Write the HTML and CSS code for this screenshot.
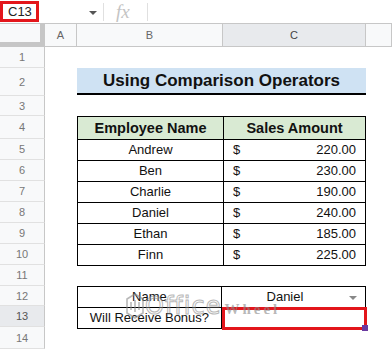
FILE: index.html
```html
<!DOCTYPE html>
<html lang="en">
<head>
  <meta charset="UTF-8">
  <meta name="viewport" content="width=device-width, initial-scale=1.0">
  <title>Using Comparison Operators</title>
  <link rel="stylesheet" href="styles.css">
</head>
<body>
  <div class="page">
    <div class="toolbar">
      <div class="namebox">C13</div>
      <div class="namebox-drop"><span class="caret"></span></div>
      <div class="sep"></div>
      <div class="fx">fx</div>
      <div class="sep"></div>
    </div>

    <div class="sheet">
      <!-- column headers -->
      <div class="corner"></div>
      <div class="colhead">A</div>
      <div class="colhead">B</div>
      <div class="colhead active">C</div>
      <div class="colhead"></div>

      <!-- row headers -->
      <div class="rowhead r1">1</div>
      <div class="rowhead r2">2</div>
      <div class="rowhead r3">3</div>
      <div class="rowhead r4">4</div>
      <div class="rowhead r5">5</div>
      <div class="rowhead r6">6</div>
      <div class="rowhead r7">7</div>
      <div class="rowhead r8">8</div>
      <div class="rowhead r9">9</div>
      <div class="rowhead r10">10</div>
      <div class="rowhead r11">11</div>
      <div class="rowhead r12">12</div>
      <div class="rowhead r13 active">13</div>
      <div class="rowhead r14">14</div>

      <div class="title">Using Comparison Operators</div>

      <table class="data">
        <tr class="head-row">
          <th>Employee Name</th>
          <th>Sales Amount</th>
        </tr>
        <tr><td class="name">Andrew</td><td class="amount"><span class="cur">$</span>220.00</td></tr>
        <tr><td class="name">Ben</td><td class="amount"><span class="cur">$</span>230.00</td></tr>
        <tr><td class="name">Charlie</td><td class="amount"><span class="cur">$</span>190.00</td></tr>
        <tr><td class="name">Daniel</td><td class="amount"><span class="cur">$</span>240.00</td></tr>
        <tr><td class="name">Ethan</td><td class="amount"><span class="cur">$</span>185.00</td></tr>
        <tr><td class="name">Finn</td><td class="amount"><span class="cur">$</span>225.00</td></tr>
      </table>

      <table class="data lookup">
        <tr class="row12">
          <td class="name">Name</td>
          <td class="name pick">Daniel<span class="pick-arrow"></span></td>
        </tr>
        <tr class="row13">
          <td class="name">Will Receive Bonus?</td>
          <td></td>
        </tr>
      </table>

      <div class="selection"><span class="handle"></span></div>
    </div>

    <!-- site watermark laid over the sheet -->
    <div class="watermark">
      <svg width="18" height="26" viewBox="0 0 18 26">
        <path d="M9 1 L17 6 L17 20 L9 25 L1 20 L1 6 Z" fill="none" stroke="#8a8a8a" stroke-width="1.6"/>
        <path d="M5 9 L5 17 M9 7 L9 19 M13 9 L13 17" stroke="#8a8a8a" stroke-width="1.6"/>
      </svg>
      <span class="wm-office">Office</span><span class="wm-wheel">Wheel</span>
    </div>
  </div>
</body>
</html>
```

FILE: styles.css
```css
* {
  box-sizing: border-box;
}
body {
  margin: 0;
  background: #fff;
  font-family: "Liberation Sans", Arial, sans-serif;
}
.page {
  position: relative;
  width: 392px;
  height: 352px;
  overflow: hidden;
}

/* formula bar */
.toolbar {
  display: flex;
  align-items: center;
  height: 24px;
  border-bottom: 1px solid #c7c7c7;
}
.namebox {
  width: 39px;
  height: 21px;
  border: 3px solid #e3161b;
  padding-left: 5px;
  font-size: 13px;
  line-height: 15px;
  color: #222;
}
.namebox-drop {
  width: 64px;
  display: flex;
  justify-content: flex-end;
  padding-right: 6px;
}
.caret {
  width: 0;
  height: 0;
  border-left: 4px solid transparent;
  border-right: 4px solid transparent;
  border-top: 4px solid #555;
  margin-top: 2px;
}
.sep {
  width: 1px;
  height: 18px;
  background: #e0e0e0;
}
.fx {
  width: 43px;
  padding-left: 12px;
  font-family: "Liberation Serif", serif;
  font-style: italic;
  font-size: 19px;
  color: #c4c4c4;
  line-height: 20px;
}

/* grid */
.sheet {
  display: grid;
  grid-template-columns: 45px 32px 146px 143px 1fr;
  grid-template-rows: 23px 21px 28px 20px 23px 21px 21px 21px 21px 21px 21px 21px 20px 21px 22px;
}
.corner {
  background: #f8f9fa;
  border-right: 5px solid #c6c6c6;
  border-bottom: 5px solid #c6c6c6;
}
.colhead {
  background: #f8f9fa;
  border-right: 1px solid #c7c7c7;
  border-bottom: 1px solid #c7c7c7;
  font-size: 11px;
  color: #666;
  text-align: center;
  line-height: 22px;
}
.colhead.active {
  background: #e8eaed;
  color: #444;
}
.rowhead {
  grid-column: 1;
  background: #f8f9fa;
  border-right: 1px solid #c7c7c7;
  border-bottom: 1px solid #e1e1e1;
  font-size: 11px;
  color: #777;
  display: flex;
  align-items: center;
  justify-content: center;
}
.rowhead.active {
  background: #e8eaed;
  color: #555;
}

.title {
  grid-row: 3;
  grid-column: 3 / 5;
  height: 27px;
  background: #cfe2f3;
  border-bottom: 2px solid #000;
  font-weight: bold;
  font-size: 17px;
  line-height: 25px;
  text-align: center;
  color: #111;
}

.data {
  grid-row: 5 / 12;
  grid-column: 3 / 5;
  align-self: start;
  border-collapse: collapse;
  width: 100%;
  font-size: 13px;
  color: #111;
}
.data td, .data th {
  border: 1px solid #000;
  padding: 0 9px;
  height: 21px;
  line-height: 18px;
}
.data th {
  background: #d9ead3;
  font-size: 14.5px;
  height: 23px;
}
.data td.name {
  text-align: center;
  width: 146px;
}
.data td.amount {
  text-align: right;
}
.cur {
  float: left;
}

.lookup {
  grid-row: 13 / 15;
}
.lookup .pick {
  position: relative;
  padding-right: 26px;
}
.pick-arrow {
  position: absolute;
  right: 8px;
  top: 9px;
  width: 0;
  height: 0;
  border-left: 4px solid transparent;
  border-right: 4px solid transparent;
  border-top: 4px solid #888;
}

.selection {
  grid-row: 14;
  grid-column: 4;
  position: relative;
  margin: 1px -1px -3px -1px;
  border: 3px solid #e3161b;
}
.handle {
  position: absolute;
  right: -4px;
  bottom: -4px;
  width: 6px;
  height: 6px;
  background: #6a3aa0;
}

.watermark {
  position: absolute;
  left: 126px;
  top: 293px;
  display: flex;
  align-items: flex-end;
  gap: 1px;
  opacity: 0.6;
  pointer-events: none;
}
.wm-office {
  font-family: "DejaVu Sans", sans-serif;
  font-size: 24px;
  line-height: 26px;
  color: rgba(255, 255, 255, 0.4);
  -webkit-text-stroke: 1px #8a8a8a;
  letter-spacing: 1px;
}
.wm-wheel {
  font-family: "Liberation Serif", serif;
  font-weight: bold;
  font-size: 15px;
  line-height: 20px;
  color: #8a8a8a;
  letter-spacing: 3px;
  margin-left: 2px;
}
```
